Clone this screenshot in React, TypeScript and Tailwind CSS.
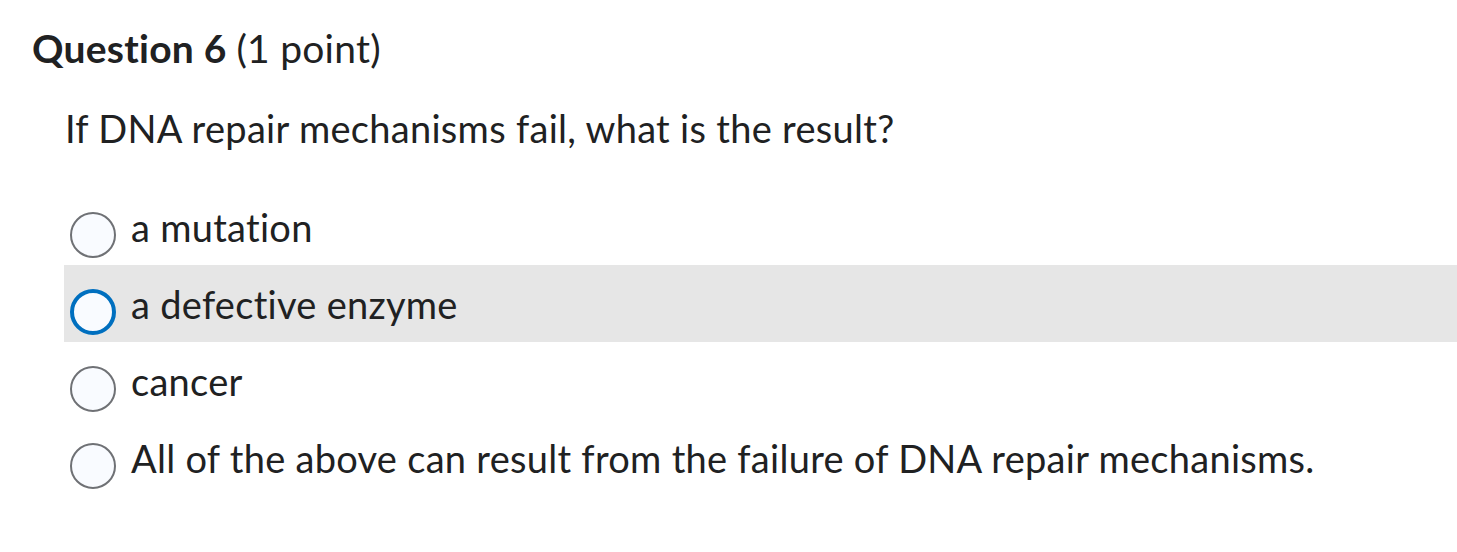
import React from "react";

const options = [
  "a mutation",
  "a defective enzyme",
  "cancer",
  "All of the above can result from the failure of DNA repair mechanisms.",
];

export default function App() {
  return (
    <div
      className="w-[1457px] h-[552px] bg-white text-[#202122] [font-variant-ligatures:none]"
      style={{ fontFamily: "Lato, 'Open Sans', sans-serif" }}
    >
      <div className="pt-[24px] pl-[32px]">
        <h2 className="text-[39px] leading-[48px] font-bold tracking-[0.25px]">
          Question 6 <span className="font-normal">(1 point)</span>
        </h2>
      </div>
      <p className="pl-[65px] mt-[33px] text-[38px] leading-[46px] tracking-[0.3px]">
        If DNA repair mechanisms fail, what is the result?
      </p>
      <div className="ml-[64px] mt-[37px] flex flex-col">
        {options.map((o, i) => (
          <div key={i} className={`flex items-center h-[77px] pl-[6px] ${i === 1 ? "bg-[#e6e6e6]" : ""}`}>
            <span
              className={`shrink-0 w-[46px] h-[46px] rounded-full bg-[#f9fbff] ${
                i === 1 ? "border-[4px] border-[#006fbf]" : "border-2 border-[#6f7175]"
              } mt-[16px]`}
            />
            <span className="ml-[15px] text-[38px] leading-[46px] tracking-[0.28px]">{o}</span>
          </div>
        ))}
      </div>
    </div>
  );
}
